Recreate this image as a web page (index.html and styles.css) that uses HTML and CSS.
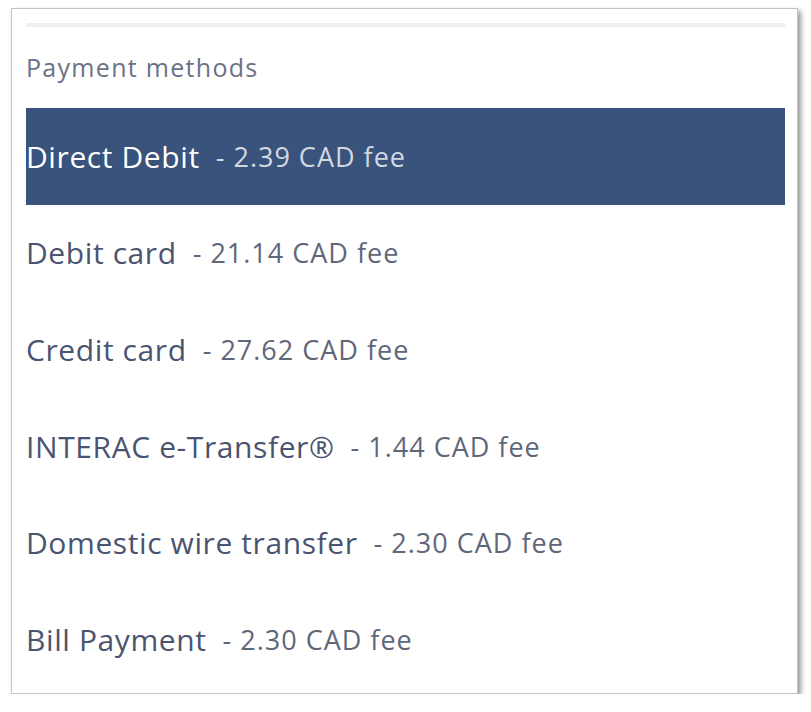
FILE: index.html
```html
<!DOCTYPE html>
<html lang="en">
  <head>
    <meta charset="UTF-8" />
    <meta name="viewport" content="width=device-width, initial-scale=1.0" />
    <title>Payment methods</title>
    <link rel="stylesheet" href="styles.css">
  </head>
  <body>
    <div class="panel">
      <div class="rule"></div>
      <div class="heading">Payment methods</div>
      <ul class="methods">
        <li class="method selected">
          <span class="name">Direct Debit</span>
          <span class="fee">- 2.39 CAD fee</span>
        </li>
        <li class="method">
          <span class="name">Debit card</span>
          <span class="fee">- 21.14 CAD fee</span>
        </li>
        <li class="method">
          <span class="name">Credit card</span>
          <span class="fee">- 27.62 CAD fee</span>
        </li>
        <li class="method">
          <span class="name">INTERAC e-Transfer®</span>
          <span class="fee">- 1.44 CAD fee</span>
        </li>
        <li class="method">
          <span class="name">Domestic wire transfer</span>
          <span class="fee">- 2.30 CAD fee</span>
        </li>
        <li class="method">
          <span class="name">Bill Payment</span>
          <span class="fee">- 2.30 CAD fee</span>
        </li>
      </ul>
    </div>
  </body>
</html>
```

FILE: styles.css
```css
body {
  font-family: "Open Sans", "Noto Sans", sans-serif;
  margin: 0;
  background: #ffffff;
  color: #4a5570;
}

.panel {
  box-sizing: border-box;
  width: 787px;
  height: 686px;
  margin: 8px 0 0 11px;
  padding: 14px 12px 0 14px;
  background: #ffffff;
  border: 1px solid #c4c4c4;
  box-shadow: 3px 3px 5px rgba(0, 0, 0, 0.4);
}

.rule {
  height: 4px;
  background: #eeeeee;
}

.heading {
  margin-top: 24px;
  height: 57px;
  font-size: 25px;
  line-height: 32px;
  letter-spacing: 1.3px;
  color: #6a7286;
}

.methods {
  list-style: none;
  margin: 0;
  padding: 0;
}

.method {
  display: flex;
  align-items: center;
  gap: 16px;
  height: 96.6px;
  color: #4a5470;
}

.name {
  font-size: 30px;
  letter-spacing: 0.6px;
}

.fee {
  font-size: 27px;
  letter-spacing: 1px;
  color: #5f6779;
}

.method.selected {
  background: #39537d;
  color: #ffffff;
}

.method.selected .fee {
  color: #d2d7e0;
}
```
